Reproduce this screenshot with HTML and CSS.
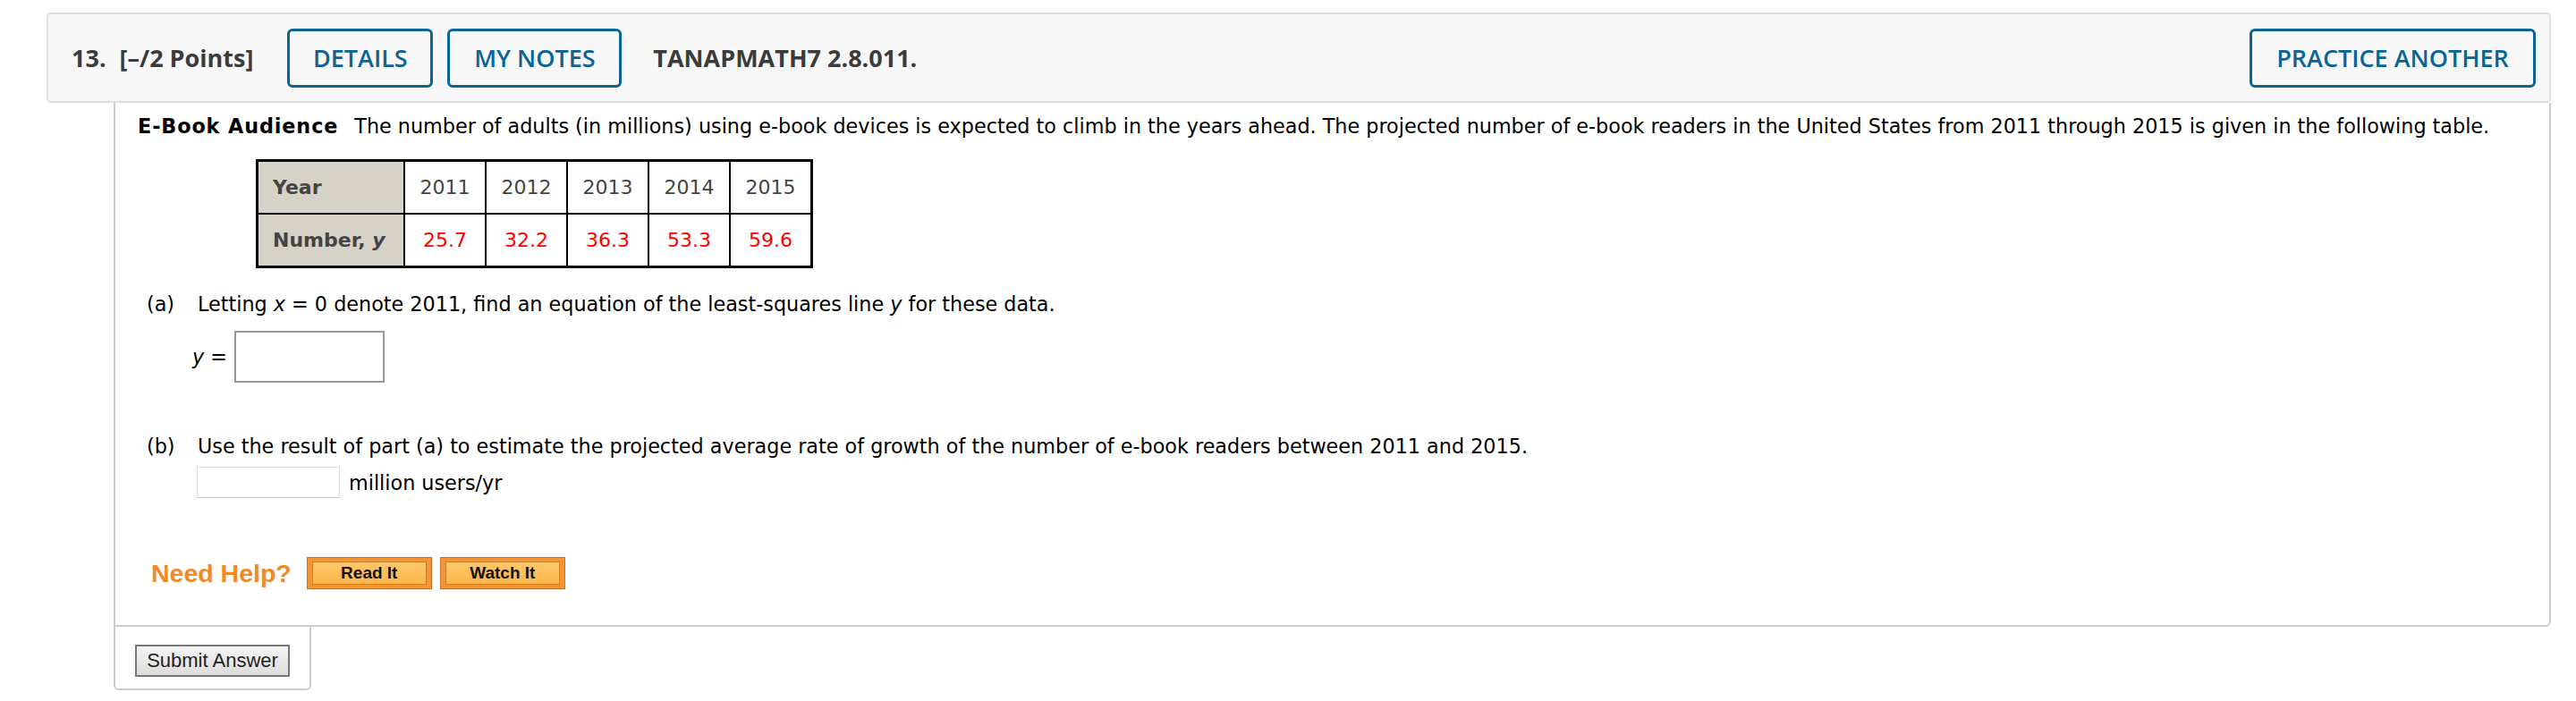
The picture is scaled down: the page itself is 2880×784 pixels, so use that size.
FILE: index.html
```html
<!DOCTYPE html>
<html>
<head>
<meta charset="utf-8">
<link rel="stylesheet" href="styles.css">
</head>
<body>
<div class="question">
  <div class="qhead">
    <span class="qnum">13.</span>
    <span class="qpoints">[&ndash;/2 Points]</span>
    <button class="obtn details">DETAILS</button>
    <button class="obtn notes">MY NOTES</button>
    <span class="qid">TANAPMATH7 2.8.011.</span>
    <span class="spacer"></span>
    <button class="obtn practice">PRACTICE ANOTHER</button>
  </div>
  <div class="qbody">
    <p class="intro"><b>E-Book Audience</b><span class="gap"></span>The number of adults (in millions) using e-book devices is expected to climb in the years ahead. The projected number of e-book readers in the United States from 2011 through 2015 is given in the following table.</p>
    <table class="data">
      <tr><th>Year</th><td>2011</td><td>2012</td><td>2013</td><td>2014</td><td>2015</td></tr>
      <tr><th>Number, <i>y</i></th><td class="red">25.7</td><td class="red">32.2</td><td class="red">36.3</td><td class="red">53.3</td><td class="red">59.6</td></tr>
    </table>
    <div class="part part-a">
      <div class="ptext"><span class="plabel">(a)</span><span>Letting <i>x</i> = 0 denote 2011, find an equation of the least-squares line <i>y</i> for these data.</span></div>
      <div class="answer-a"><span class="yeq"><i>y</i> =</span><span class="bigbox"></span></div>
    </div>
    <div class="part part-b">
      <div class="ptext"><span class="plabel">(b)</span><span>Use the result of part (a) to estimate the projected average rate of growth of the number of e-book readers between 2011 and 2015.</span></div>
      <div class="answer-b"><span class="smallbox"></span><span class="unit">million users/yr</span></div>
    </div>
    <div class="help">
      <span class="needhelp">Need Help?</span>
      <button class="hbtn"><span>Read It</span></button>
      <button class="hbtn"><span>Watch It</span></button>
    </div>
  </div>
  <div class="submitbox">
    <button class="submit">Submit Answer</button>
  </div>
</div>
</body>
</html>
```
FILE: styles.css
```css
html, body {
  margin: 0;
  padding: 0;
  background: #ffffff;
}
body {
  font-family: "DejaVu Sans", Verdana, sans-serif;
  font-size: 22.3px;
  color: #000;
}
.question {
  margin: 14px 0 0 52px;
  width: 2800px;
}
.qhead {
  box-sizing: border-box;
  height: 101px;
  display: flex;
  align-items: center;
  background: #f7f7f7;
  border: 2px solid #dddddd;
  border-radius: 5px;
  padding: 0 15px 0 26px;
  font-family: "Open Sans", sans-serif;
  font-weight: 700;
  font-size: 27px;
  color: #3b3b3b;
  white-space: nowrap;
}
.qnum { margin-right: 15px; }
.qpoints { margin-right: 38px; }
.obtn {
  box-sizing: border-box;
  height: 66px;
  padding: 0;
  background: transparent;
  border: 3px solid #0b6496;
  border-radius: 6px;
  color: #0b6496;
  font-family: "Open Sans", sans-serif;
  font-weight: 600;
  font-size: 27px;
  white-space: nowrap;
}
.details { width: 163px; margin-right: 16px; }
.notes { width: 195px; margin-right: 35px; }
.practice { width: 320px; }
.spacer { flex: 1; }
.qbody {
  margin-left: 75px;
  border-left: 2px solid #cccccc;
  border-right: 2px solid #cccccc;
  border-bottom: 2px solid #cccccc;
  border-radius: 0 0 6px 0;
  padding: 10px 0 0 25px;
  height: 586px;
  box-sizing: border-box;
}
.intro {
  margin: 0;
  line-height: 32px;
}
.intro b { letter-spacing: 0.9px; }
.gap { display: inline-block; width: 18px; }
table.data {
  margin: 21px 0 0 132px;
  border-collapse: collapse;
  border: 3px solid #000;
  color: #444;
  font-size: 22px;
}
table.data th, table.data td {
  border: 2px solid #000;
  height: 57px;
  padding: 0;
}
table.data th {
  background: #d6d2c8;
  text-align: left;
  padding-left: 16px;
  width: 146px;
  font-weight: bold;
}
table.data td {
  width: 89px;
  text-align: center;
}
table.data td.red { color: #ff0000; }
.part { margin-left: 10px; }
.part-a { margin-top: 24px; }
.ptext { display: flex; line-height: 32px; }
.plabel { width: 57px; }
.answer-a {
  display: flex;
  align-items: center;
  margin: 14px 0 0 51px;
}
.yeq { margin-right: 8px; }
.bigbox {
  display: inline-block;
  width: 168px;
  height: 58px;
  box-sizing: border-box;
  border: 2px solid #999;
}
.part-b { margin-top: 55px; }
.answer-b {
  display: flex;
  align-items: center;
  margin: 7px 0 0 56px;
}
.smallbox {
  display: inline-block;
  width: 160px;
  height: 35px;
  box-sizing: border-box;
  border: 1px solid #dddddd;
  border-bottom-color: #c8c8c8;
}
.unit { margin-left: 10px; }
.help {
  display: flex;
  align-items: center;
  margin: 66px 0 0 15px;
}
.needhelp {
  font-family: "Liberation Sans", Arial, sans-serif;
  font-weight: bold;
  font-size: 28.5px;
  color: #f08a24;
  margin-right: 17px;
}
.hbtn {
  box-sizing: border-box;
  width: 140px;
  height: 36px;
  padding: 4px 5px;
  margin-right: 9px;
  background: #f59431;
  border: 1px solid #c2742a;
  display: flex;
}
.hbtn span {
  flex: 1;
  display: flex;
  align-items: center;
  justify-content: center;
  background: linear-gradient(#ffc768, #fdb54a);
  border: 1px solid #c38233;
  font-family: "Liberation Sans", Arial, sans-serif;
  font-weight: bold;
  font-size: 19px;
  color: #111;
}
.submitbox {
  margin-left: 75px;
  width: 221px;
  height: 71px;
  box-sizing: border-box;
  border-left: 2px solid #cccccc;
  border-right: 2px solid #cccccc;
  border-bottom: 2px solid #cccccc;
  border-radius: 0 0 6px 6px;
  padding: 20px 0 0 22px;
}
.submit {
  box-sizing: border-box;
  width: 173px;
  height: 36px;
  border: 2px solid #777;
  background: linear-gradient(#f4f4f4, #dcdcdc);
  font-family: "Liberation Sans", Arial, sans-serif;
  font-size: 22px;
  color: #222;
  padding: 0;
}
```
